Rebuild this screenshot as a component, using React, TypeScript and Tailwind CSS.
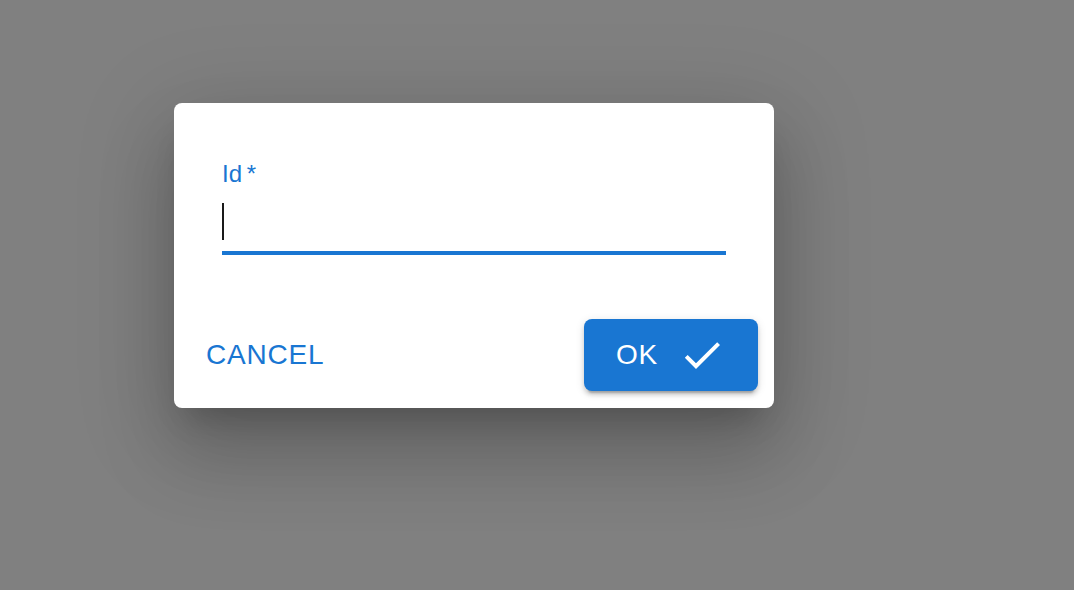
export default function App() {
  return (
    <div
      className="min-h-screen w-full bg-[#808080] pl-[174px] pt-[103px]"
      style={{ fontFamily: '"Liberation Sans", Helvetica, Arial, sans-serif' }}
    >
      <div className="flex h-[305px] w-[600px] flex-col rounded-[8px] bg-white shadow-[0_22px_30px_-14px_rgba(0,0,0,0.2),0_48px_76px_6px_rgba(0,0,0,0.14),0_18px_92px_16px_rgba(0,0,0,0.12)]">
        {/* content */}
        <div className="px-[48px] pt-[59px]">
          <label className="block h-[24px] text-[24px] leading-[24px] font-normal text-[#1976d2]">
            Id{'\u2009'}*
          </label>
          <div className="h-[65px] pt-[17px]">
            <div className="h-[37px] w-[2px] bg-[#1a1a1a]" />
          </div>
          <div className="h-[4px] w-full bg-[#1976d2]" />
        </div>

        {/* actions */}
        <div className="mt-[48px] flex items-center justify-between px-[16px] pt-[16px] pb-[17px]">
          <button className="flex h-[72px] items-center rounded-[8px] px-[16px] text-[28px] font-normal uppercase tracking-[0.8px] text-[#1976d2]">
            Cancel
          </button>
          <button className="flex h-[72px] w-[174px] items-center justify-between rounded-[8px] bg-[#1976d2] px-[32px] text-[28px] font-normal uppercase tracking-[0.8px] text-white shadow-[0_6px_2px_-4px_rgba(0,0,0,0.2),0_4px_4px_0_rgba(0,0,0,0.14),0_2px_10px_0_rgba(0,0,0,0.12)]">
            <span>OK</span>
            <svg viewBox="0 0 24 24" className="h-[48px] w-[48px]" fill="currentColor">
              <path d="M9 16.17 4.83 12l-1.42 1.41L9 19 21 7l-1.41-1.41z" />
            </svg>
          </button>
        </div>
      </div>
    </div>
  );
}
